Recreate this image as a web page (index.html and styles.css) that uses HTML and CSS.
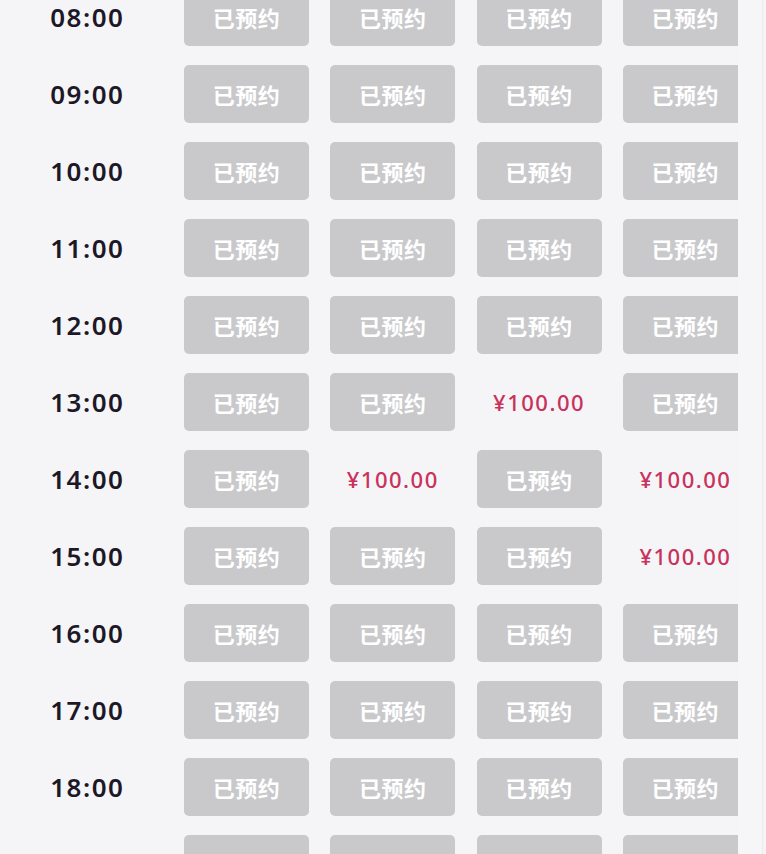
FILE: index.html
```html
<!DOCTYPE html>
<html lang="zh">
<head>
<meta charset="utf-8">
<title>预约时间表</title>
<link rel="stylesheet" href="styles.css">
</head>
<body>
<div class="viewport">
  <div class="schedule">
    <div class="time">08:00</div><div class="slot booked">已预约</div><div class="slot booked">已预约</div><div class="slot booked">已预约</div><div class="slot booked">已预约</div>
    <div class="time">09:00</div><div class="slot booked">已预约</div><div class="slot booked">已预约</div><div class="slot booked">已预约</div><div class="slot booked">已预约</div>
    <div class="time">10:00</div><div class="slot booked">已预约</div><div class="slot booked">已预约</div><div class="slot booked">已预约</div><div class="slot booked">已预约</div>
    <div class="time">11:00</div><div class="slot booked">已预约</div><div class="slot booked">已预约</div><div class="slot booked">已预约</div><div class="slot booked">已预约</div>
    <div class="time">12:00</div><div class="slot booked">已预约</div><div class="slot booked">已预约</div><div class="slot booked">已预约</div><div class="slot booked">已预约</div>
    <div class="time">13:00</div><div class="slot booked">已预约</div><div class="slot booked">已预约</div><div class="slot price">¥100.00</div><div class="slot booked">已预约</div>
    <div class="time">14:00</div><div class="slot booked">已预约</div><div class="slot price">¥100.00</div><div class="slot booked">已预约</div><div class="slot price">¥100.00</div>
    <div class="time">15:00</div><div class="slot booked">已预约</div><div class="slot booked">已预约</div><div class="slot booked">已预约</div><div class="slot price">¥100.00</div>
    <div class="time">16:00</div><div class="slot booked">已预约</div><div class="slot booked">已预约</div><div class="slot booked">已预约</div><div class="slot booked">已预约</div>
    <div class="time">17:00</div><div class="slot booked">已预约</div><div class="slot booked">已预约</div><div class="slot booked">已预约</div><div class="slot booked">已预约</div>
    <div class="time">18:00</div><div class="slot booked">已预约</div><div class="slot booked">已预约</div><div class="slot booked">已预约</div><div class="slot booked">已预约</div>
    <div class="time"></div><div class="slot booked"></div><div class="slot booked"></div><div class="slot booked"></div><div class="slot booked"></div>
  </div>
</div>
</body>
</html>
```
FILE: styles.css
```css
html, body {
  margin: 0;
  padding: 0;
  height: 854px;
  overflow: hidden;
  background: #f5f5f7;
}
body {
  font-family: "Noto Sans", "Noto Sans CJK SC", sans-serif;
}
.viewport {
  width: 738px;
  height: 854px;
  overflow: hidden;
  border-right: 24px solid #f6f6f8;
  box-shadow: 1px 0 0 #ebebee;
}
.schedule {
  display: grid;
  grid-template-columns: 162.7px repeat(4, 125px);
  grid-auto-rows: 58px;
  column-gap: 21.3px;
  row-gap: 19px;
  margin-top: -12px;
  width: 1000px;
}
.time {
  display: flex;
  align-items: center;
  justify-content: center;
  padding-left: 12px;
  font-family: "Noto Sans", sans-serif;
  font-size: 26px;
  font-weight: 600;
  color: #1d1827;
  letter-spacing: 1.5px;
}
.slot {
  display: flex;
  align-items: center;
  justify-content: center;
  border-radius: 5px;
}
.booked {
  background: #c9c9cc;
  color: #ffffff;
  font-family: "Noto Sans CJK SC", sans-serif;
  font-size: 22px;
  font-weight: 700;
  letter-spacing: 0.5px;
}
.price {
  color: #c8325c;
  font-family: "Noto Sans", sans-serif;
  font-size: 22px;
  font-weight: 500;
  letter-spacing: 1.5px;
}
```
